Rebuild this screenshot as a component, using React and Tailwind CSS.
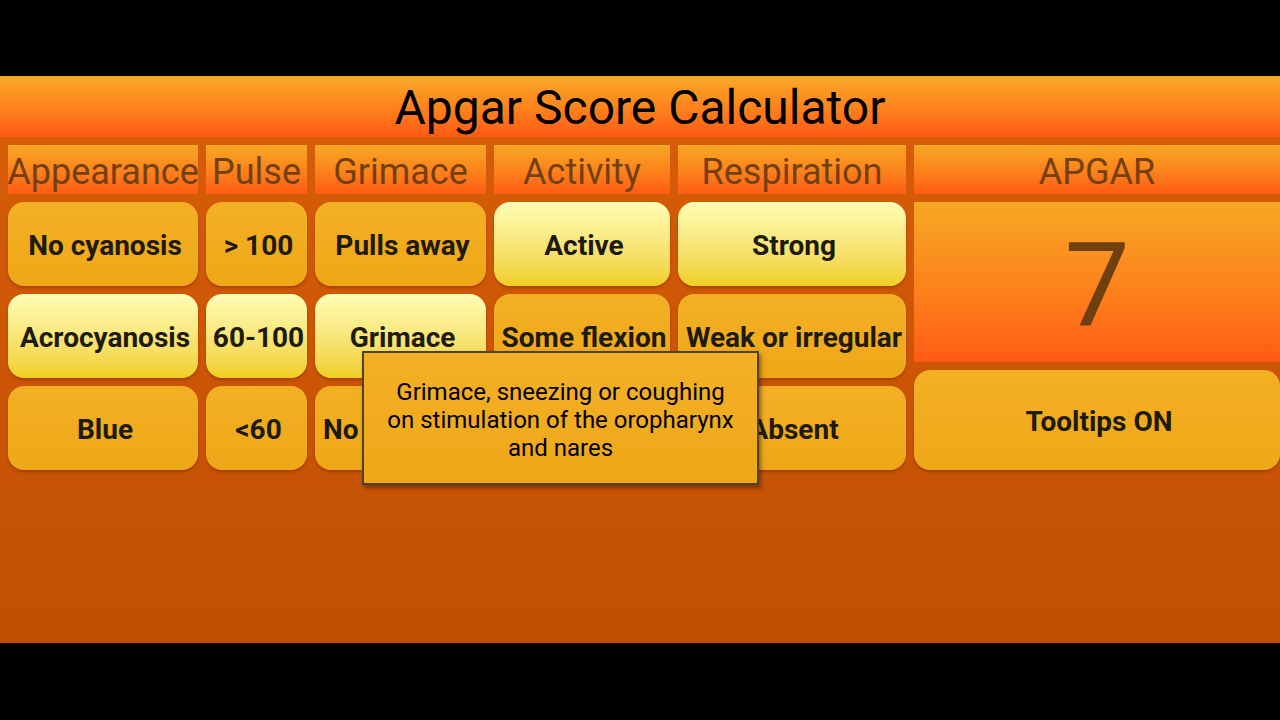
import React from "react";

const cols = [
  { h: "Appearance", opts: ["No cyanosis", "Acrocyanosis", "Blue"], sel: 1 },
  { h: "Pulse", opts: ["> 100", "60-100", "<60"], sel: 1 },
  { h: "Grimace", opts: ["Pulls away", "Grimace", "No response"], sel: 1 },
  { h: "Activity", opts: ["Active", "Some flexion", "Limp"], sel: 0 },
  { h: "Respiration", opts: ["Strong", "Weak or irregular", "Absent"], sel: 0 },
];

const font = { fontFamily: "Roboto, 'Noto Sans', sans-serif" };

function Btn({ label, selected }) {
  return (
    <div
      className={
        "h-[84px] rounded-[16px] flex items-center justify-center whitespace-nowrap overflow-hidden text-[28px] font-bold text-[#1e1a0c] pt-[3px] pl-[4px] shadow-[0_2px_3px_rgba(120,40,0,0.45)] " +
        (selected
          ? "bg-gradient-to-b from-[#fffdb4] to-[#f1cf1c]"
          : "bg-gradient-to-b from-[#f4b024] to-[#eea717]")
      }
    >
      {label}
    </div>
  );
}

export default function App() {
  return (
    <div className="w-[1280px] h-[720px] bg-black flex flex-col" style={font}>
      <div className="h-[76px] shrink-0" />
      <div className="h-[61px] shrink-0 bg-gradient-to-b from-[#f8a926] to-[#ff5814] flex items-center justify-center">
        <span className="text-[48px] leading-none text-black pt-[2px]">Apgar Score Calculator</span>
      </div>
      <div className="relative h-[506px] shrink-0 bg-gradient-to-b from-[#d65c08] to-[#c14f03] pl-2 pt-2">
        <div className="grid grid-cols-[190px_101px_171px_176px_228px_1fr] grid-rows-[49px_84px_84px_84px] gap-2">
          {cols.map((c) => (
            <div
              key={c.h}
              className="bg-gradient-to-b from-[#f6a824] to-[#ff5a14] flex items-center justify-center text-[36px] leading-none text-[#75400e] whitespace-nowrap overflow-hidden pt-[5px]"
            >
              {c.h}
            </div>
          ))}
          <div className="bg-gradient-to-b from-[#f6a824] to-[#ff5a14] flex items-center justify-center text-[36px] leading-none text-[#75400e] pt-[5px]">
            APGAR
          </div>
          {[0, 1, 2].map((r) =>
            cols.map((c, ci) => (
              <div key={c.h + r} style={{ gridColumn: ci + 1, gridRow: r + 2 }}>
                <Btn label={c.opts[r]} selected={c.sel === r} />
              </div>
            ))
          )}
          <div className="col-start-6 row-start-2 row-span-3 flex flex-col gap-2">
            <div className="h-[160px] bg-gradient-to-b from-[#f6a824] to-[#ff5a14] flex items-center justify-center text-[116px] leading-none text-[#6f3f0d] pt-[8px]">
              7
            </div>
            <div className="h-[100px] rounded-[16px] bg-gradient-to-b from-[#f4b024] to-[#eea717] flex items-center justify-center text-[28px] font-bold text-[#1e1a0c] pt-[3px] pl-[4px] shadow-[0_2px_3px_rgba(120,40,0,0.45)]">
              Tooltips ON
            </div>
          </div>
        </div>
        <div className="absolute left-[362px] top-[214px] w-[397px] h-[134px] bg-gradient-to-b from-[#f4b026] to-[#eea717] border-2 border-[#4c4332] shadow-[2px_3px_4px_rgba(60,20,0,0.5)] flex items-center justify-center text-center text-[24px] leading-[28px] text-black pt-[3px]">
          <div>
            Grimace, sneezing or coughing
            <br />
            on stimulation of the oropharynx
            <br />
            and nares
          </div>
        </div>
      </div>
    </div>
  );
}
